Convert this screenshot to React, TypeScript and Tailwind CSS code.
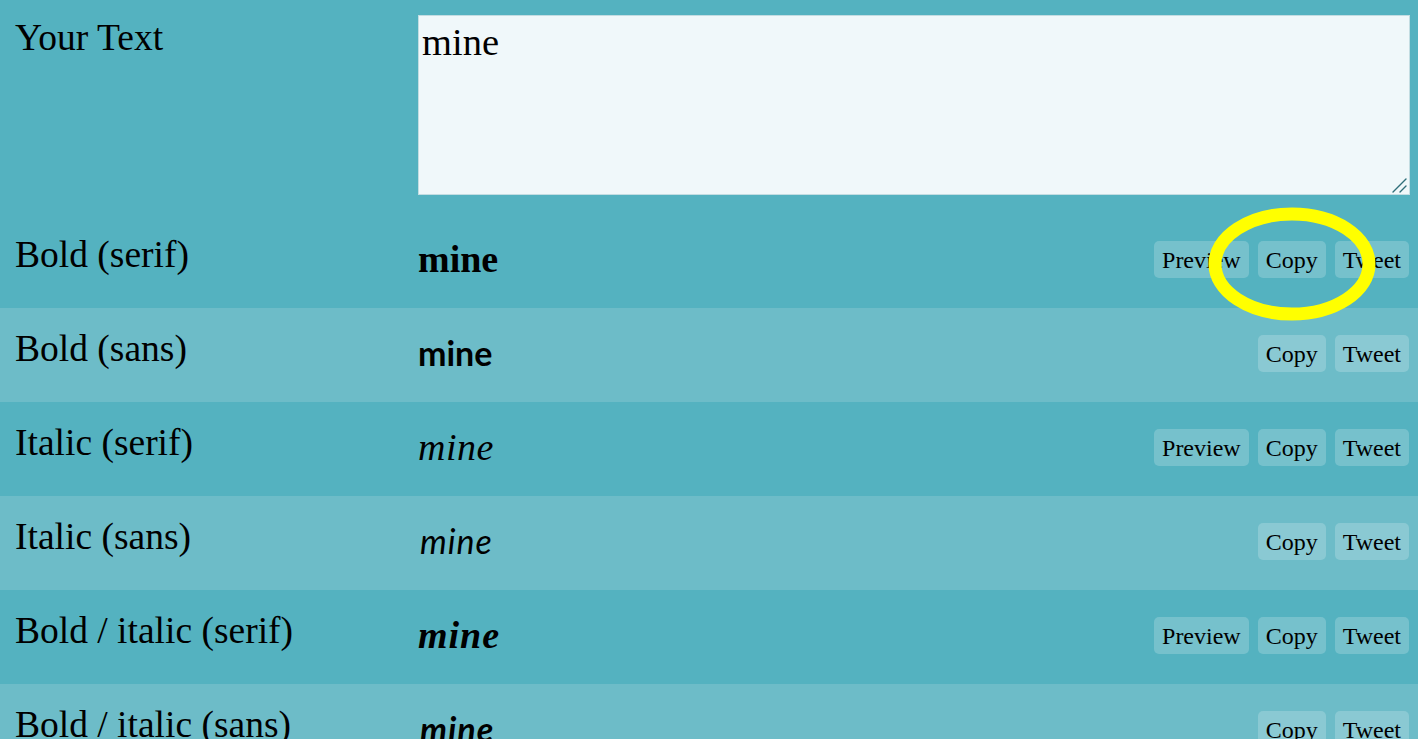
import { useState } from "react";

type Style = {
  label: string;
  cls: string;
  preview?: boolean;
};

const serif = "font-['Liberation_Serif','DejaVu_Serif',serif]";
const sans = "font-['Lato','Open_Sans',sans-serif]";

const styles: Style[] = [
  { label: "Bold (serif)", cls: `${serif} font-bold text-[38px] pt-[25px]`, preview: true },
  { label: "Bold (sans)", cls: `${sans} font-bold text-[34px] pt-[24px]` },
  { label: "Italic (serif)", cls: `${serif} italic text-[38px] pt-[25px] tracking-[0.5px]`, preview: true },
  { label: "Italic (sans)", cls: `${sans} italic text-[34px] pt-[24px] pl-[2px] tracking-[1px]` },
  { label: "Bold / italic (serif)", cls: `${serif} font-bold italic text-[38px] pt-[25px] tracking-[1px]`, preview: true },
  { label: "Bold / italic (sans)", cls: `${sans} font-bold italic text-[34px] pt-[24px] pl-[2px] tracking-[1px]` },
];

function Btn({ children }: { children: string }) {
  return (
    <button
      type="button"
      className={`h-[37px] px-2 rounded-[5px] bg-white/20 text-[24px] leading-none text-black ${serif}`}
    >
      {children}
    </button>
  );
}

function Row({ item, text, light }: { item: Style; text: string; light: boolean }) {
  return (
    <div
      className={`grid grid-cols-[418px_1fr_auto] h-[94px] ${light ? "bg-[#6dbcc8]" : "bg-[#54b2c0]"}`}
    >
      <div className="pl-[15px] pt-[20px] text-[37.5px] leading-[41px] whitespace-nowrap">
        {item.label}
      </div>
      <div className={`leading-[41px] ${item.cls}`}>{text}</div>
      <div className="flex items-start gap-[9px] pt-[27px] pr-[9px]">
        {item.preview && <Btn>Preview</Btn>}
        <Btn>Copy</Btn>
        <Btn>Tweet</Btn>
      </div>
    </div>
  );
}

export default function App() {
  const [text, setText] = useState("mine");

  return (
    <div className={`relative min-h-screen bg-[#54b2c0] text-black ${serif}`}>
      <div className="grid grid-cols-[418px_1fr] pt-[15px] pb-[19px] pr-[8px]">
        <div className="pl-[15px] pt-[2px] text-[37.5px] leading-[41px]">
          Your Text
        </div>
        <div className="relative">
          <textarea
            value={text}
            onChange={(e) => setText(e.target.value)}
            className={`block h-[180px] w-full resize-none bg-[#f0f8fa] border border-[#c3dde2] px-[3px] pt-[5px] text-[38.5px] leading-[42px] outline-none ${serif}`}
          />
          {/* resize grip */}
          <svg
            className="absolute right-[3px] bottom-[2px] pointer-events-none"
            width="15"
            height="15"
            viewBox="0 0 15 15"
          >
            <path
              d="M1 14 L14 1 M8 14 L14 8"
              stroke="#2f6f79"
              strokeWidth="1.4"
              strokeLinecap="round"
            />
          </svg>
        </div>
      </div>

      {styles.map((item, i) => (
        <Row key={item.label} item={item} text={text} light={i % 2 === 1} />
      ))}

      {/* highlight annotation */}
      <svg
        className="absolute left-[1202px] top-[201px] pointer-events-none"
        width="180"
        height="126"
        viewBox="0 0 180 126"
      >
        <ellipse
          cx="90"
          cy="63"
          rx="77"
          ry="50"
          fill="none"
          stroke="#ffff00"
          strokeWidth="13"
        />
      </svg>
    </div>
  );
}
